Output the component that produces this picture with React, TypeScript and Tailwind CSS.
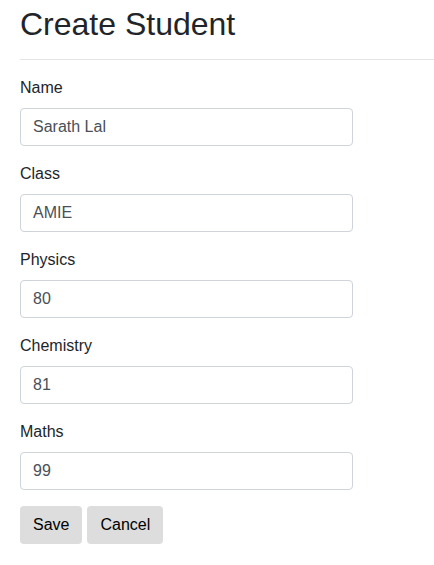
const fields = [
  { label: "Name", value: "Sarath Lal" },
  { label: "Class", value: "AMIE" },
  { label: "Physics", value: "80" },
  { label: "Chemistry", value: "81" },
  { label: "Maths", value: "99" },
];

export default function App() {
  return (
    <div className="min-h-[565px] bg-white pl-5 font-['Liberation_Sans',Arial,sans-serif] text-[#212529]">
      <h2 className="pt-[5px] text-[32px] leading-[38px] font-normal">Create Student</h2>
      <hr className="mt-4 mb-4 border-0 border-t border-[#e5e5e5]" />
      <form onSubmit={(e) => e.preventDefault()}>
        {fields.map((f) => (
          <div key={f.label} className="mb-4">
            <label className="mb-2 block text-base leading-6">{f.label}</label>
            <input
              defaultValue={f.value}
              className="block h-[38px] w-[333px] rounded border border-[#ced4da] bg-white px-3 text-base text-[#495057] outline-none"
            />
          </div>
        ))}
        <div className="flex gap-[5px]">
          <button type="submit" className="h-[38px] rounded bg-[#dddddd] px-[13px] text-base leading-6 text-black">
            Save
          </button>
          <button type="button" className="h-[38px] rounded bg-[#dddddd] px-[13px] text-base leading-6 text-black">
            Cancel
          </button>
        </div>
      </form>
    </div>
  );
}
